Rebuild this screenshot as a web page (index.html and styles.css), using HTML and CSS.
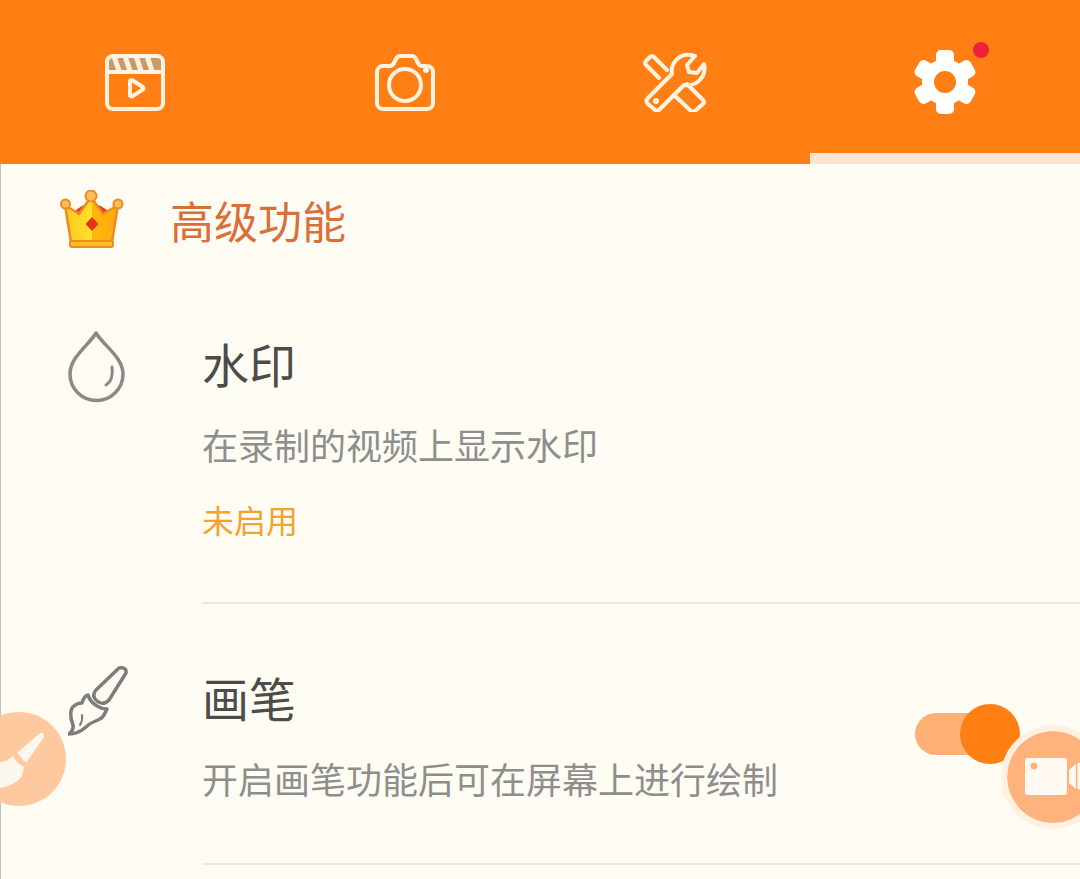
FILE: index.html
```html
<!DOCTYPE html>
<html lang="zh-CN">
  <head>
    <meta charset="UTF-8" />
    <meta name="viewport" content="width=device-width, initial-scale=1.0" />
    <title>设置</title>
    <link rel="stylesheet" href="styles.css">
  </head>
  <body>
    <div id="container">
      <div class="tabs">
        <div class="tab">
          <svg class="tab-icon" width="60" height="57" viewBox="0 0 60 57" fill="none" stroke="#fff3e0" stroke-width="4" stroke-linejoin="round" stroke-linecap="round">
            <path d="M4 17V7a5 5 0 0 1 5-5h42a5 5 0 0 1 5 5v10z" fill="#c99a68" stroke="none"/>
            <path d="M9 2l5 15M20 2l5 15M31 2l5 15M42 2l5 15" stroke-width="5" stroke-linecap="butt"/>
            <rect x="2" y="2" width="56" height="53" rx="6"/>
            <path d="M2 18h56"/>
            <path d="M25 27.500v13.500a1.500 1.500 0 0 0 2.300 1.300l10.500-6.700a1.500 1.500 0 0 0 0-2.600l-10.500-6.700a1.500 1.500 0 0 0-2.300 1.300z"/>
          </svg>
        </div>
        <div class="tab">
          <svg class="tab-icon" width="60" height="57" viewBox="0 0 60 57" fill="none" stroke="#fff3e0" stroke-width="4" stroke-linejoin="round">
            <path d="M8 55a6 6 0 0 1-6-6V18a6 6 0 0 1 6-6h7c2 0 3-1 4-3l2-4c1-2 2-3 4-3h12c2 0 3 1 4 3l2 4c1 2 2 3 4 3h5a6 6 0 0 1 6 6v31a6 6 0 0 1-6 6z"/>
            <circle cx="30" cy="31" r="16"/>
            <circle cx="51" cy="16" r="3" fill="#fff3e0" stroke="none"/>
          </svg>
        </div>
        <div class="tab">
          <svg class="tab-icon" width="64" height="60" viewBox="0 0 64 60" fill="none" stroke="#fff3e0" stroke-width="4" stroke-linejoin="round" stroke-linecap="round">
            <path d="M24 18L11 5Q9 3 7 5L3 9Q1 11 3 13L16 26"/>
            <path d="M44 32L60 48Q62 50 60 52L52 59Q50 61 48 59L32 44"/>
            <path d="M29 22C27 12 36 1 48 3L52 4L44 13L46 20L54 21L61 12C64 24 54 35 41 33L17 57Q14 60 11 57L5 52Q2 49 5 46Z"/>
            <circle cx="13" cy="49" r="1.500" stroke-width="3"/>
          </svg>
        </div>
        <div class="tab active">
          <svg class="tab-icon" width="64" height="64" viewBox="-32 -32 64 64" fill="#fff">
            <circle r="23"/>
            <rect x="-9" y="-32" width="18" height="16" rx="5"/>
            <rect x="-9" y="-32" width="18" height="16" rx="5" transform="rotate(60)"/>
            <rect x="-9" y="-32" width="18" height="16" rx="5" transform="rotate(120)"/>
            <rect x="-9" y="-32" width="18" height="16" rx="5" transform="rotate(180)"/>
            <rect x="-9" y="-32" width="18" height="16" rx="5" transform="rotate(240)"/>
            <rect x="-9" y="-32" width="18" height="16" rx="5" transform="rotate(300)"/>
            <circle r="11" fill="#ff7f14"/>
          </svg>
          <span class="dot"></span>
        </div>
      </div>

      <div class="list">
        <div class="section-head">
          <svg class="crown" width="64" height="58" viewBox="0 0 64 58">
            <defs>
              <linearGradient id="crown-fill" x1="0" y1="0" x2="1" y2="0">
                <stop offset="0" stop-color="#ffc91c"/>
                <stop offset="0.5" stop-color="#ffe02c"/>
                <stop offset="0.5" stop-color="#ffb90f"/>
                <stop offset="1" stop-color="#ffa80c"/>
              </linearGradient>
            </defs>
            <path d="M13 23Q31 4 50 23L48 32H15z" fill="#e2421a"/>
            <path d="M5 15L19 24L31 7L43 24L58 15L52 52H11z" fill="url(#crown-fill)" stroke="#ee8a24" stroke-width="2.500" stroke-linejoin="round"/>
            <rect x="10" y="51" width="43" height="6" rx="2" fill="#ffc21a" stroke="#ee8a24" stroke-width="2"/>
            <path d="M32 27l6.500 7-6.500 7-6.500-7z" fill="#e2341c"/>
            <circle cx="5.500" cy="14" r="4.500" fill="#ffbe5a" stroke="#ee8a24" stroke-width="2"/>
            <circle cx="31" cy="6" r="5.500" fill="#ffbe5a" stroke="#ee8a24" stroke-width="2"/>
            <circle cx="58" cy="14" r="4.500" fill="#ffbe5a" stroke="#ee8a24" stroke-width="2"/>
          </svg>
          <span class="section-title">高级功能</span>
        </div>

        <div class="row row-first">
          <div class="row-icon">
            <svg class="drop" width="58" height="72" viewBox="0 0 58 72" fill="none" stroke="#8a8a88" stroke-width="3.500" stroke-linecap="round" stroke-linejoin="round">
              <path d="M28 2C21 14 2 26 2 43A26.500 26.500 0 0 0 55 43C55 26 35 14 28 2Z"/>
              <path d="M44 36C45 44 43 51 38 54" stroke-width="3"/>
            </svg>
          </div>
          <div class="row-body">
            <div class="row-title">水印</div>
            <div class="row-sub">在录制的视频上显示水印</div>
            <div class="row-status">未启用</div>
          </div>
        </div>

        <div class="row">
          <div class="row-icon">
            <svg class="brush" width="60" height="72" viewBox="0 0 60 72" fill="none" stroke="#7d7d7b" stroke-width="3.500" stroke-linecap="round" stroke-linejoin="round">
              <path d="M51 3L28 25Q23 31 29 36Q35 41 41 35L58 8Q59 2 51 3Z"/>
              <path d="M20 30Q22 37 29 41Q34 44 39 44L37 48Q35 53 30 55Q22 58 18 62Q10 69 1 69Q6 65 5 60Q1 50 4 43Q8 38 14 38Q16 31 20 30Z"/>
              <path d="M14 50Q15 55 12 60" stroke-width="2"/>
            </svg>
          </div>
          <div class="row-body">
            <div class="row-title">画笔</div>
            <div class="row-sub">开启画笔功能后可在屏幕上进行绘制</div>
          </div>
          <div class="toggle"><span class="knob"></span></div>
        </div>
      </div>

      <div class="float float-brush">
        <svg width="46" height="62" viewBox="0 0 46 62" fill="#fbf6ee">
          <path d="M40 3L17 23L26 33L44 7Q44 2 40 3Z"/>
          <path d="M13 26Q15 32 24 37L22 46Q18 52 8 56L-6 60V33Q6 33 13 26Z"/>
        </svg>
      </div>
      <div class="float float-camera">
        <svg width="60" height="40" viewBox="0 0 60 40">
          <rect x="0" y="0" width="42" height="37" rx="3" fill="#fff9f2"/>
          <circle cx="9" cy="8" r="3.500" fill="#ffb27b"/>
          <path d="M44 12L51 6V31L44 25z" fill="#fff9f2"/>
          <rect x="52.500" y="5" width="6" height="26" fill="#fff9f2"/>
        </svg>
      </div>
    </div>
  </body>
</html>
```

FILE: styles.css
```css
body {
  margin: 0;
  font-family: "Noto Sans CJK SC", "Noto Sans", sans-serif;
  background-color: #fffcf4;
}

#container {
  position: relative;
  width: 1080px;
  height: 879px;
  overflow: hidden;
}

.tabs {
  display: grid;
  grid-template-columns: repeat(4, 1fr);
  height: 164px;
  background-color: #ff7f14;
}

.tab {
  position: relative;
  display: flex;
  align-items: center;
  justify-content: center;
}

.tab-icon {
  display: block;
}

.tab.active::after {
  content: "";
  position: absolute;
  left: 0;
  right: 0;
  bottom: 0;
  height: 11px;
  background-color: #ffe4d0;
}

.dot {
  position: absolute;
  left: 163px;
  top: 42px;
  width: 16px;
  height: 16px;
  border-radius: 50%;
  background-color: #f0203c;
}

.list {
  height: 715px;
  border-left: 1px solid #c4c2bc;
}

.section-head {
  display: flex;
  align-items: center;
  height: 110px;
  padding-left: 59px;
}

.crown {
  display: block;
  margin-right: 46px;
}

.section-title {
  margin-top: 2px;
  font-size: 44px;
  line-height: 60px;
  color: #d8703a;
}

.row {
  display: flex;
  align-items: flex-start;
  padding-top: 63px;
}

.row-first {
  padding-top: 59px;
}

.row-icon {
  width: 201px;
  flex-shrink: 0;
  padding-left: 67px;
  box-sizing: border-box;
}

.row-icon svg {
  display: block;
  margin-top: -2px;
}

.row-body {
  flex: 1;
  padding-bottom: 60px;
  border-bottom: 2px solid #e9e8e3;
}

.row-first .row-body {
  padding-bottom: 63px;
}

.row-title {
  font-size: 47px;
  line-height: 60px;
  color: #4c4c4a;
}

.row-sub {
  margin-top: 26px;
  font-size: 36px;
  line-height: 50px;
  color: #8e8e8c;
}

.row-status {
  margin-top: 30px;
  font-size: 32px;
  line-height: 40px;
  color: #f0a42c;
}

.toggle {
  position: absolute;
  left: 915px;
  top: 713px;
  width: 90px;
  height: 42px;
  border-radius: 21px;
  background-color: #ffb074;
}

.knob {
  position: absolute;
  right: -15px;
  top: -9px;
  width: 60px;
  height: 60px;
  border-radius: 50%;
  background-color: #ff7f14;
}

.float {
  position: absolute;
  border-radius: 50%;
  box-sizing: border-box;
  overflow: hidden;
}

.float-brush {
  left: -28px;
  top: 712px;
  width: 94px;
  height: 94px;
  background-color: #ffc9a0;
}

.float-brush svg {
  position: absolute;
  left: 28px;
  top: 18px;
  overflow: visible;
}

.float-camera {
  left: 1001px;
  top: 725px;
  width: 104px;
  height: 104px;
  border: 6px solid #fff0e2;
  background-color: #ffb27b;
  background-clip: padding-box;
}

.float-camera svg {
  position: absolute;
  left: 18px;
  top: 27px;
}
```
